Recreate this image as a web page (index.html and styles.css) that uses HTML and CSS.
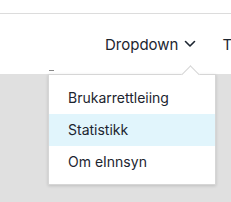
FILE: index.html
```html
<!DOCTYPE html>
<html lang="nn">
<head>
    <meta charset="UTF-8">
    <meta name="viewport" content="width=device-width, initial-scale=1.0">
    <title>Dropdown</title>
    <link rel="stylesheet" href="styles.css">
</head>
<body>
    <div class="top-strip"></div>
    <header class="site-header">
        <nav class="nav">
            <button class="nav-dropdown">
                Dropdown
                <svg class="chevron" width="14" height="14" viewBox="0 0 14 14">
                    <path d="M2.5 4.5 L7 9 L11.5 4.5" fill="none" stroke="#1c2530" stroke-width="1.6" stroke-linecap="round" stroke-linejoin="round"/>
                </svg>
            </button>
            <span class="nav-link">T</span>
        </nav>
        <span class="dash"></span>
    </header>
    <main class="page-body">
        <!-- open dropdown menu -->
        <div class="dropdown-menu">
            <span class="dropdown-arrow"></span>
            <a class="dropdown-item">Brukarrettleiing</a>
            <a class="dropdown-item active">Statistikk</a>
            <a class="dropdown-item">Om eInnsyn</a>
        </div>
    </main>
</body>
</html>
```

FILE: styles.css
```css
body {
    margin: 0;
    font-family: Inter, "Noto Sans", sans-serif;
    color: #1c2530;
    background: #e0e0e0;
    overflow: hidden;
}
.top-strip {
    height: 13px;
    background: white;
    border-bottom: 1px solid #dcdcdc;
}
.site-header {
    position: relative;
    height: 60px;
    background: white;
}
.nav {
    display: flex;
    align-items: center;
    height: 100%;
    padding-left: 105px;
    white-space: nowrap;
}
.nav-dropdown {
    display: flex;
    align-items: center;
    gap: 5px;
    padding: 0;
    border: none;
    background: none;
    font: inherit;
    font-size: 15px;
    color: inherit;
}
.chevron {
    display: block;
}
.nav-link {
    margin-left: 25px;
    font-size: 15px;
}
.dash {
    position: absolute;
    left: 49px;
    top: 56px;
    width: 5px;
    height: 1px;
    background: #888;
}
.page-body {
    position: relative;
    height: 128px;
}
.dropdown-menu {
    position: absolute;
    left: 48px;
    top: 0;
    width: 166px;
    padding: 7px 0 6px;
    background: white;
    border: 1px solid #d6d6d6;
    box-shadow: 0 1px 3px rgba(0, 0, 0, 0.15);
}
.dropdown-arrow {
    position: absolute;
    top: -7px;
    left: 135px;
    width: 12px;
    height: 12px;
    background: white;
    border-top: 1px solid #d6d6d6;
    border-left: 1px solid #d6d6d6;
    transform: rotate(45deg);
}
.dropdown-item {
    display: block;
    height: 32px;
    line-height: 32px;
    padding-left: 19px;
    font-size: 14px;
}
.dropdown-item.active {
    background: #e1f5fc;
}
```
